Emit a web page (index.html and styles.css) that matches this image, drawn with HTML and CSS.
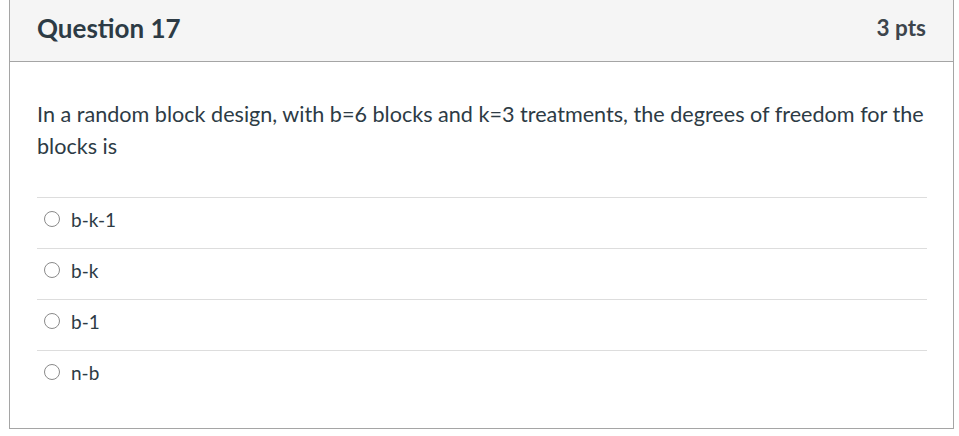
FILE: index.html
```html
<!DOCTYPE html>
<html>
<head>
<meta charset="utf-8">
<link rel="stylesheet" href="styles.css">
</head>
<body>
<div class="question">
  <div class="header">
    <h2 class="title">Question 17</h2>
    <span class="points">3 pts</span>
  </div>
  <div class="content">
    <p class="text">In a random block design, with b=6 blocks and k=3 treatments, the degrees of freedom for the blocks is</p>
    <div class="answers">
      <label class="answer"><span class="radio"></span><span class="answer-text">b-k-1</span></label>
      <label class="answer"><span class="radio"></span><span class="answer-text">b-k</span></label>
      <label class="answer"><span class="radio"></span><span class="answer-text">b-1</span></label>
      <label class="answer"><span class="radio"></span><span class="answer-text">n-b</span></label>
    </div>
  </div>
</div>
</body>
</html>
```
FILE: styles.css
```css
html, body {
  margin: 0;
  padding: 0;
  background: #ffffff;
}
body {
  padding: 0 5px 0 9px;
  font-family: Lato, "Open Sans", sans-serif;
  color: #2d3b45;
}
.question {
  margin-top: -1px;
  width: 945px;
  height: 430px;
  border: 1px solid #a5a5a5;
  box-sizing: border-box;
}
.header {
  display: flex;
  align-items: center;
  justify-content: space-between;
  height: 62px;
  box-sizing: border-box;
  background: #f5f5f5;
  border-bottom: 1px solid #a5a5a5;
  padding: 0 27px 6px 27px;
}
.title {
  margin: 0;
  font-size: 26px;
  font-weight: 700;
}
.points {
  font-size: 22.5px;
  font-weight: 700;
  color: #3d454c;
}
.content {
  padding: 0 26px 0 27px;
}
.text {
  margin: 36px 0 0 0;
  font-size: 21.6px;
  line-height: 32px;
}
.answers {
  margin-top: 35px;
}
.answer {
  display: flex;
  align-items: center;
  height: 51px;
  padding-bottom: 8px;
  border-top: 1px solid #dddddd;
  box-sizing: border-box;
}
.radio {
  width: 16px;
  height: 16px;
  border: 1px solid #8a8a8a;
  border-radius: 50%;
  box-sizing: border-box;
  margin-left: 7px;
  margin-right: 11px;
}
.answer-text {
  font-size: 19px;
}
```
